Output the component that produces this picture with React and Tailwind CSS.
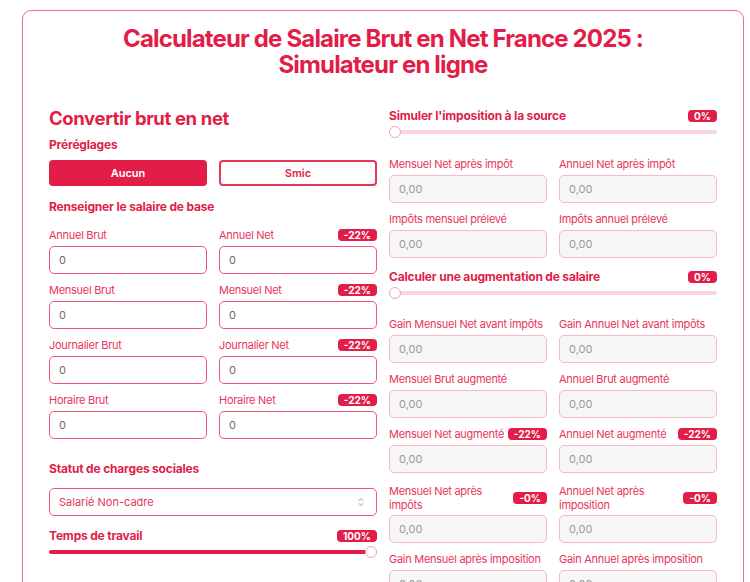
import React from "react";

const Badge = ({ children }) => (
  <span className="inline-flex h-[12px] shrink-0 items-center rounded-[4px] bg-[#e11d48] px-[6px] text-[10px] font-bold leading-none text-white">
    {children}
  </span>
);

const Field = ({ label, badge, value = "0", readOnly = false, twoLine = false }) => (
  <div className="flex flex-col">
    <div className={`flex items-center justify-between ${twoLine ? "h-[31px] pt-[2px]" : "h-[16px]"}`}>
      <span className="whitespace-nowrap text-[11px] leading-[14px] tracking-[-0.025em] text-[#e8355b]">{label}</span>
      {badge && <Badge>{badge}</Badge>}
    </div>
    <div
      className={`mt-[3px] flex h-[28px] items-center rounded-[5px] border px-[9px] text-[11px] ${
        readOnly
          ? "border-[#f8b9c6] bg-[#f6f6f6] text-[#9a9a9a]"
          : "border-[#ee5a7a] bg-white text-[#6b6b6b]"
      }`}
    >
      {value}
    </div>
  </div>
);

const Slider = ({ value }) => (
  <div className="relative h-[12px]">
    <div className="absolute left-0 right-0 top-[4px] h-[4px] rounded-full bg-[#fcd5dd]" />
    {value > 0 && (
      <div
        className="absolute left-0 top-[4px] h-[4px] rounded-full bg-[#e11d48]"
        style={{ width: `${value}%` }}
      />
    )}
    <div
      className="absolute top-0 h-[12px] w-[12px] rounded-full border border-[#f3a3b4] bg-white"
      style={{ left: `calc(${value}% - ${value > 0 ? 12 : 0}px)` }}
    />
  </div>
);

const SectionHead = ({ children, badge }) => (
  <div className="flex h-[16px] items-center justify-between">
    <span className="whitespace-nowrap text-[12px] font-bold leading-none tracking-[-0.015em] text-[#e11d48]">{children}</span>
    {badge && <Badge>{badge}</Badge>}
  </div>
);

const Heading = ({ children, className = "" }) => (
  <div className={`flex h-[16px] items-center whitespace-nowrap text-[12px] font-bold tracking-[-0.015em] text-[#e11d48] ${className}`}>
    {children}
  </div>
);

export default function App() {
  return (
    <div
      className="h-[582px] w-[750px] overflow-hidden bg-white pl-[22px] pt-[10px]"
      style={{ fontFamily: "Inter, 'Noto Sans', sans-serif" }}
    >
      <div className="w-[722px] rounded-[9px] border border-[#f26d88] px-[26px] pb-[20px] pt-[15px]">
        <h1 className="text-center text-[24px] font-bold leading-[26px] tracking-[-0.035em] text-[#e11d48]">
          Calculateur de Salaire Brut en Net France 2025 :
          <br />
          Simulateur en ligne
        </h1>

        <div className="mt-[28px] grid grid-cols-2 gap-x-[12px]">
          {/* Left column */}
          <div className="flex flex-col">
            <h2 className="h-[24px] text-[18.5px] font-bold leading-[24px] tracking-[-0.02em] text-[#e11d48]">
              Convertir brut en net
            </h2>
            <Heading className="mt-[7px]">Préréglages</Heading>
            <div className="mt-[7px] grid grid-cols-2 gap-x-[12px]">
              <button className="flex h-[26px] items-center justify-center rounded-[4px] bg-[#e11d48] text-[11px] font-semibold text-white">
                Aucun
              </button>
              <button className="flex h-[26px] items-center justify-center rounded-[4px] border-2 border-[#e5365c] bg-white text-[11px] font-semibold text-[#e11d48]">
                Smic
              </button>
            </div>
            <Heading className="mt-[13px]">Renseigner le salaire de base</Heading>
            <div className="mt-[12px] grid grid-cols-2 gap-x-[12px] gap-y-[8px]">
              <Field label="Annuel Brut" />
              <Field label="Annuel Net" badge="-22%" />
              <Field label="Mensuel Brut" />
              <Field label="Mensuel Net" badge="-22%" />
              <Field label="Journalier Brut" />
              <Field label="Journalier Net" badge="-22%" />
              <Field label="Horaire Brut" />
              <Field label="Horaire Net" badge="-22%" />
            </div>
            <Heading className="mt-[22px]">Statut de charges sociales</Heading>
            <div className="mt-[11px] flex h-[28px] items-center justify-between rounded-[5px] border border-[#ee5a7a] bg-white pl-[9px] pr-[11px] text-[11px] text-[#e8355b]">
              <span>Salarié Non-cadre</span>
              <svg width="8" height="10" viewBox="0 0 8 10" fill="none" stroke="#c9c9c9" strokeWidth="1.2" strokeLinecap="round" strokeLinejoin="round">
                <path d="M2 3.5 L4 1.5 L6 3.5" />
                <path d="M2 6.5 L4 8.5 L6 6.5" />
              </svg>
            </div>
            <div className="mt-[12px]">
              <SectionHead badge="100%">Temps de travail</SectionHead>
            </div>
            <div className="mt-[2px]">
              <Slider value={100} />
            </div>
            <Heading className="mt-[22px]">Nombre d'heures contractuelles par semaine</Heading>
          </div>

          {/* Right column */}
          <div className="flex flex-col">
            <div className="mt-[2px]">
              <SectionHead badge="0%">Simuler l'imposition à la source</SectionHead>
            </div>
            <div className="mt-[2px]">
              <Slider value={0} />
            </div>
            <div className="mt-[18px] grid grid-cols-2 gap-x-[12px] gap-y-[8px]">
              <Field label="Mensuel Net après impôt" value="0,00" readOnly />
              <Field label="Annuel Net après impôt" value="0,00" readOnly />
              <Field label="Impôts mensuel prélevé" value="0,00" readOnly />
              <Field label="Impôts annuel prélevé" value="0,00" readOnly />
            </div>
            <div className="mt-[11px]">
              <SectionHead badge="0%">Calculer une augmentation de salaire</SectionHead>
            </div>
            <div className="mt-[2px]">
              <Slider value={0} />
            </div>
            <div className="mt-[17px] grid grid-cols-2 gap-x-[12px] gap-y-[8px]">
              <Field label="Gain Mensuel Net avant impôts" value="0,00" readOnly />
              <Field label="Gain Annuel Net avant impôts" value="0,00" readOnly />
              <Field label="Mensuel Brut augmenté" value="0,00" readOnly />
              <Field label="Annuel Brut augmenté" value="0,00" readOnly />
              <Field label="Mensuel Net augmenté" badge="-22%" value="0,00" readOnly />
              <Field label="Annuel Net augmenté" badge="-22%" value="0,00" readOnly />
              <Field label={<>Mensuel Net après<br />impôts</>} badge="-0%" value="0,00" readOnly twoLine />
              <Field label={<>Annuel Net après<br />imposition</>} badge="-0%" value="0,00" readOnly twoLine />
              <Field label="Gain Mensuel après imposition" value="0,00" readOnly />
              <Field label="Gain Annuel après imposition" value="0,00" readOnly />
            </div>
          </div>
        </div>
      </div>
    </div>
  );
}
